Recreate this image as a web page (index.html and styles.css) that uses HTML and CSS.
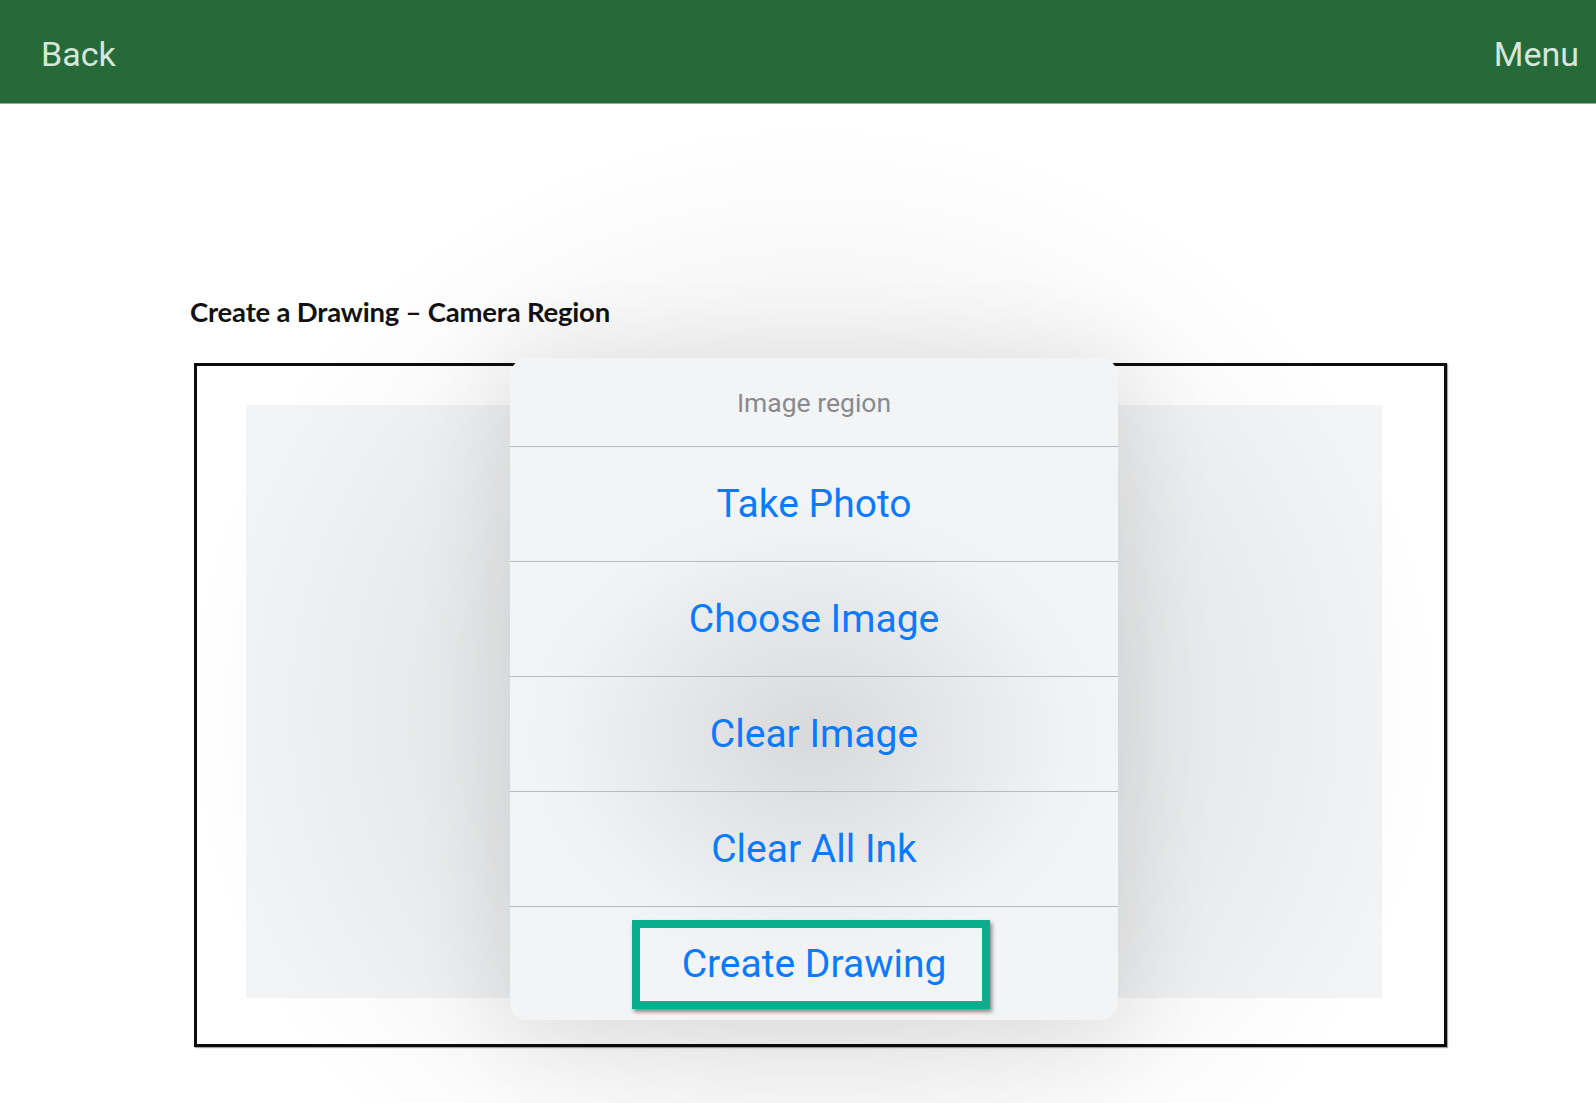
FILE: index.html
```html
<!DOCTYPE html>
<html lang="en">
<head>
<meta charset="utf-8">
<title>Create a Drawing – Camera Region</title>
<link rel="stylesheet" href="styles.css">
</head>
<body>
<header class="topbar">
  <span class="nav-link">Back</span>
  <span class="nav-link">Menu</span>
</header>
<main class="doc">
  <h1 class="doc-title">Create a Drawing – Camera Region</h1>
  <div class="frame">
    <div class="image-area"></div>
  </div>
  <div class="shade"></div>
  <div class="sheet">
    <div class="sheet-title">Image region</div>
    <div class="sheet-row">Take Photo</div>
    <div class="sheet-row">Choose Image</div>
    <div class="sheet-row">Clear Image</div>
    <div class="sheet-row">Clear All Ink</div>
    <div class="sheet-row"><span class="highlight">Create Drawing</span></div>
  </div>
</main>
</body>
</html>
```

FILE: styles.css
```css
html, body {
  margin: 0;
  padding: 0;
}
body {
  width: 1596px;
  height: 1103px;
  overflow: hidden;
  background: #ffffff;
  font-family: Roboto, "Noto Sans", sans-serif;
}
.topbar {
  height: 104px;
  box-sizing: border-box;
  background: #276a39;
  border-bottom: 1px solid #9aa39c;
  display: flex;
  justify-content: space-between;
  align-items: center;
  padding: 4px 17px 0 41px;
}
.nav-link {
  color: #d6e7da;
  font-size: 34px;
  font-weight: 400;
  line-height: 1;
}
.doc {
  position: relative;
  padding-top: 193px;
  height: 999px;
  box-sizing: border-box;
  overflow: hidden;
}
.doc-title {
  margin: 0 0 0 190px;
  font-family: Lato, "Liberation Sans", sans-serif;
  font-weight: 700;
  font-size: 27.5px;
  line-height: 30px;
  color: #111;
  letter-spacing: -0.2px;
}
.frame {
  margin: 36px 0 0 194px;
  width: 1253px;
  height: 684px;
  box-sizing: border-box;
  border: 3px solid #0c0c0c;
  box-shadow: 1px 1px 1px rgba(0,0,0,0.35);
  padding: 39px 0 0 49px;
  background: #fff;
}
.image-area {
  width: 1136px;
  height: 593px;
  background: #f3f4f5;
}
.shade {
  position: absolute;
  left: 184px;
  top: 16px;
  width: 1260px;
  height: 983px;
  pointer-events: none;
  background: radial-gradient(ellipse 630px 590px at 50% 60%, rgba(0,0,0,0.10) 0%, rgba(0,0,0,0.075) 40%, rgba(0,0,0,0.035) 70%, rgba(0,0,0,0.01) 88%, rgba(0,0,0,0) 100%);
}
.sheet {
  position: absolute;
  left: 510px;
  top: 254px;
  width: 608px;
  height: 662px;
  border-radius: 18px;
  overflow: hidden;
  background: radial-gradient(ellipse 320px 260px at 50% 57%, #d8d9db 0%, #e6e7e8 45%, #f1f2f3 80%, #f3f4f5 100%);
  box-shadow: 0 10px 90px 10px rgba(0,0,0,0.09);
  display: flex;
  flex-direction: column;
}
.sheet-title {
  height: 88px;
  flex: none;
  display: flex;
  align-items: center;
  justify-content: center;
  color: #8a8a8e;
  font-size: 26.5px;
}
.sheet-row {
  height: 114px;
  flex: none;
  border-top: 1px solid #b9babc;
  display: flex;
  align-items: center;
  justify-content: center;
  color: #0a7aff;
  font-size: 39px;
}
.highlight {
  width: 358px;
  height: 89px;
  box-sizing: border-box;
  border: 8px solid #0aae8c;
  box-shadow: 2px 3px 4px rgba(0,0,0,0.45);
  display: flex;
  align-items: center;
  justify-content: center;
  padding-left: 6px;
  margin-right: 6px;
}
```
